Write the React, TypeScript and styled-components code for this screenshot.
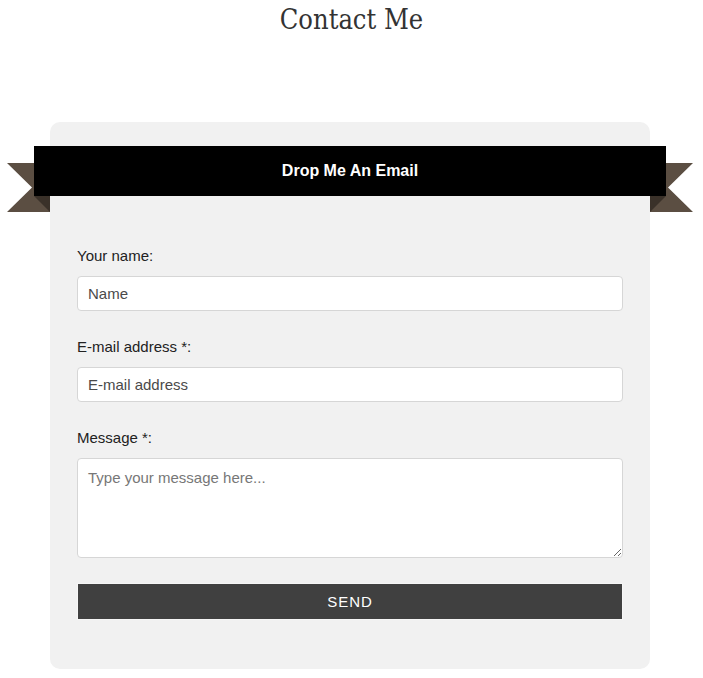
import React from "react";
import styled, { createGlobalStyle } from "styled-components";

const Global = createGlobalStyle`
  html, body { margin: 0; padding: 0; background: #ffffff; }
  body { font-family: "Liberation Sans", Arial, sans-serif; }
  * { box-sizing: border-box; }
`;

const Page = styled.div`
  width: 703px;
  padding-bottom: 10px;
`;

const Title = styled.h1`
  margin: 0;
  height: 40px;
  line-height: 40px;
  text-align: center;
  font-family: "DejaVu Serif Condensed", "DejaVu Serif", "Liberation Serif", serif;
  font-weight: normal;
  font-size: 27px;
  color: #333333;
`;

const Card = styled.section`
  width: 600px;
  margin: 82px 0 0 50px;
  padding: 24px 27px 49px;
  background: #f1f1f1;
  border-radius: 10px;
`;

const Ribbon = styled.div`
  position: relative;
  margin: 0 -43px;
`;

const Tail = styled.svg<{ $side: "left" | "right" }>`
  position: absolute;
  top: 17px;
  ${(p) => (p.$side === "left" ? "left: -27px;" : "right: -27px;")}
  width: 43px;
  height: 49px;
  display: block;
`;

const Bar = styled.div`
  position: relative;
  height: 50px;
  background: #000000;
  color: #ffffff;
  display: flex;
  align-items: center;
  justify-content: center;
  font-weight: bold;
  font-size: 16px;
`;

const Form = styled.form`
  display: flex;
  flex-direction: column;
  padding-top: 51px;
`;

const Field = styled.div`
  display: flex;
  flex-direction: column;
  margin-bottom: 27px;
`;

const Label = styled.label`
  display: block;
  font-size: 15px;
  line-height: 17px;
  color: #222222;
  margin-bottom: 12px;
`;

const inputBase = `
  width: 100%;
  border: 1px solid #d6d6d6;
  border-radius: 4px;
  background: #ffffff;
  font-family: "Liberation Sans", Arial, sans-serif;
  font-size: 15px;
  padding: 0 10px;
  outline: none;
`;

const TextInput = styled.input`
  ${inputBase}
  height: 35px;
  color: #444444;
  &::placeholder { color: #4a4a4a; opacity: 1; }
`;

const TextArea = styled.textarea`
  ${inputBase}
  height: 100px;
  padding: 10px;
  resize: vertical;
  display: block;
  &::placeholder { color: #777777; opacity: 1; }
`;

const SendButton = styled.button`
  width: 100%;
  height: 37px;
  margin-top: -2px;
  border: 1px solid #f6f6f6;
  background: #404040;
  color: #ffffff;
  font-family: "Liberation Sans", Arial, sans-serif;
  font-size: 15px;
  letter-spacing: 1px;
  cursor: pointer;
`;

const TAIL = "#5b4e42";
const FOLD = "#3a3129";

export default function App() {
  return (
    <Page>
      <Global />
      <Title>Contact Me</Title>
      <Card>
        <Ribbon>
          <Tail $side="left" viewBox="0 0 43 49">
            <polygon points="0,0 43,0 43,49 0,49 25,24.5" fill={TAIL} />
            <polygon points="27,33 43,33 43,49" fill={FOLD} />
          </Tail>
          <Tail $side="right" viewBox="0 0 43 49">
            <polygon points="0,0 43,0 18,24.5 43,49 0,49" fill={TAIL} />
            <polygon points="0,33 16,33 0,49" fill={FOLD} />
          </Tail>
          <Bar>Drop Me An Email</Bar>
        </Ribbon>
        <Form onSubmit={(e) => e.preventDefault()}>
          <Field>
            <Label htmlFor="name">Your name:</Label>
            <TextInput id="name" type="text" placeholder="Name" />
          </Field>
          <Field>
            <Label htmlFor="email">E-mail address *:</Label>
            <TextInput id="email" type="email" placeholder="E-mail address" />
          </Field>
          <Field>
            <Label htmlFor="msg">Message *:</Label>
            <TextArea id="msg" placeholder="Type your message here..." />
          </Field>
          <SendButton type="submit">SEND</SendButton>
        </Form>
      </Card>
    </Page>
  );
}
